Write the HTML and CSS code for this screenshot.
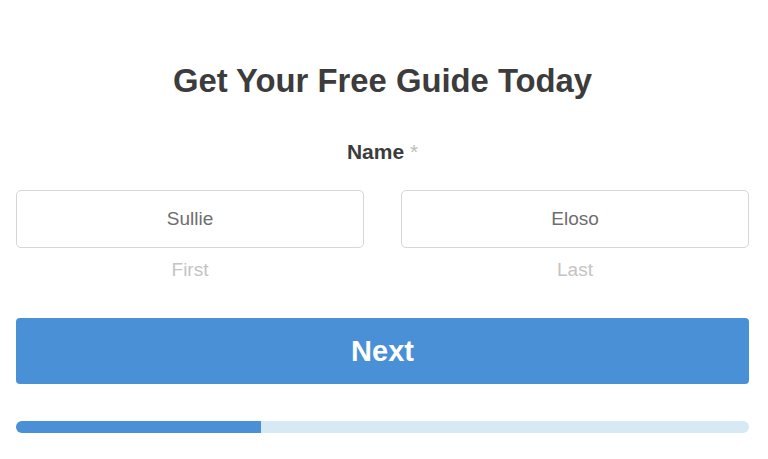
FILE: index.html
```html
<!DOCTYPE html>
<html>
<head>
<meta charset="utf-8">
<link rel="stylesheet" href="styles.css">
</head>
<body>
<div class="form">
  <h1 class="title">Get Your Free Guide Today</h1>
  <div class="label">Name <span class="req">*</span></div>
  <div class="fields">
    <div class="field">
      <div class="input">Sullie</div>
      <div class="sub">First</div>
    </div>
    <div class="field">
      <div class="input">Eloso</div>
      <div class="sub">Last</div>
    </div>
  </div>
  <button class="next">Next</button>
  <div class="progress"><div class="fill" style="width:33.4%"></div></div>
</div>
</body>
</html>
```
FILE: styles.css
```css
html, body {
  margin: 0;
  padding: 0;
  background: #ffffff;
  font-family: "Liberation Sans", Arial, sans-serif;
}
.form {
  width: 733px;
  margin-left: 16px;
  padding-top: 58px;
  display: flex;
  flex-direction: column;
}
.title {
  margin: 0;
  text-align: center;
  font-size: 32.8px;
  line-height: 46px;
  font-weight: bold;
  color: #3c3c3c;
}
.label {
  margin-top: 36px;
  text-align: center;
  font-size: 21px;
  line-height: 24px;
  font-weight: bold;
  color: #3c3c3c;
}
.req {
  color: #bdbdbd;
  font-weight: normal;
}
.fields {
  margin-top: 26px;
  display: flex;
  gap: 37px;
}
.field {
  flex: 1;
  display: flex;
  flex-direction: column;
}
.input {
  height: 56px;
  border: 1px solid #d6d6d6;
  border-radius: 5px;
  display: flex;
  align-items: center;
  justify-content: center;
  font-size: 19px;
  color: #6e6e6e;
}
.sub {
  margin-top: 10px;
  text-align: center;
  font-size: 19px;
  line-height: 24px;
  color: #c4c4c4;
}
.next {
  margin-top: 36px;
  height: 66px;
  border: none;
  border-radius: 4px;
  background: #4a90d6;
  color: #ffffff;
  font-family: "Liberation Sans", Arial, sans-serif;
  font-size: 29px;
  font-weight: bold;
  padding: 0;
}
.progress {
  margin-top: 37px;
  height: 12px;
  border-radius: 6px;
  background: #d8e9f6;
  overflow: hidden;
}
.fill {
  height: 100%;
  background: #4a90d6;
}
```
